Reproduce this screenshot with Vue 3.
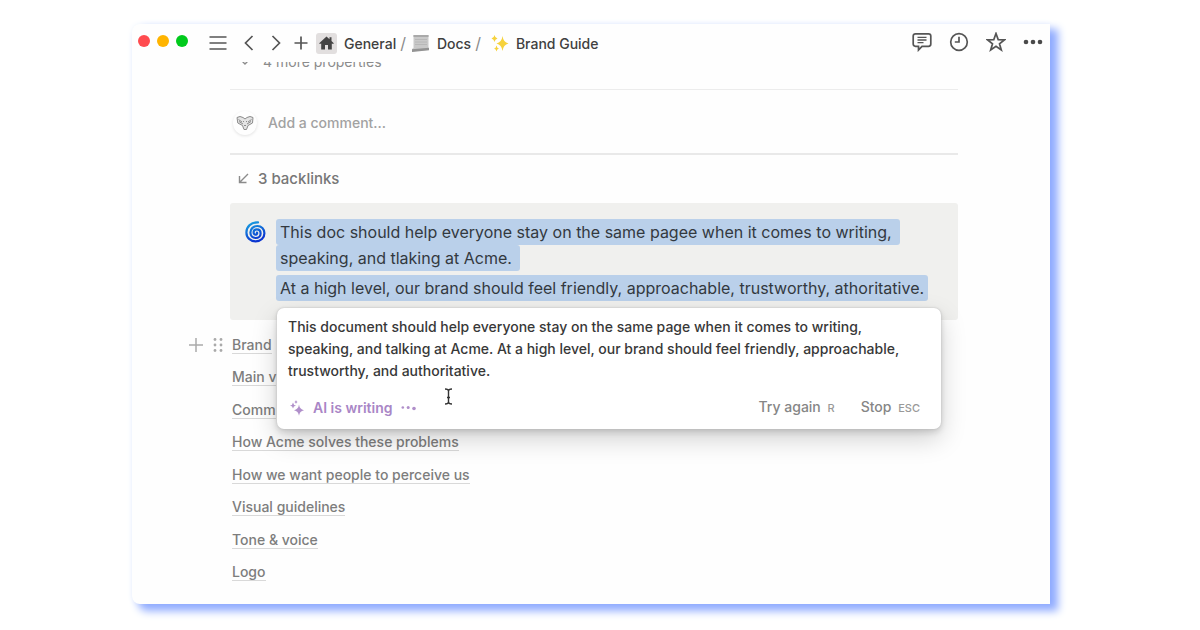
<template>
    <main class="stage">
        <div class="window">
            <header class="topbar">
                <div class="lights">
                    <span class="light red"></span>
                    <span class="light yellow"></span>
                    <span class="light green"></span>
                </div>
                <nav class="nav">
                    <button class="icon-btn" aria-label="Menu">
                        <svg width="18" height="18" viewBox="0 0 18 18"><path d="M0.5 3H17.5M0.5 9H17.5M0.5 15H17.5" /></svg>
                    </button>
                    <button class="icon-btn back" aria-label="Back">
                        <svg width="10" height="16" viewBox="0 0 10 16"><path d="M8.5 1L1.5 8L8.5 15" /></svg>
                    </button>
                    <button class="icon-btn forward" aria-label="Forward">
                        <svg width="10" height="16" viewBox="0 0 10 16"><path d="M1.5 1L8.5 8L1.5 15" /></svg>
                    </button>
                    <button class="icon-btn add" aria-label="New page">
                        <svg width="14" height="14" viewBox="0 0 14 14"><path d="M7 0.5V13.5M0.5 7H13.5" /></svg>
                    </button>
                    <a class="crumb" href="#general">
                        <span class="home">
                            <svg width="15" height="14" viewBox="0 0 15 14"><path d="M7.5 0.5L10.5 3.2V1.2H12.5V5L14.8 7.2L14.2 8L12.8 7.4V13.5H9V9H6V13.5H2.2V7.4L0.8 8L0.2 7.2Z" /></svg>
                        </span>
                        General
                    </a>
                    <span class="slash">/</span>
                    <a class="crumb docs" href="#docs">
                        <svg width="19" height="19" viewBox="0 0 19 19">
                            <path d="M2.5 1H17.5V16L1 17.5V15L2.5 14Z" fill="#c9c9c9" />
                            <path d="M2.5 1H17.5V3H2.5Z" fill="#a9a9a9" />
                            <path d="M4 5.5H16M4 8H16M4 10.5H16" stroke="#b8b8b8" />
                            <path d="M1 15.2L18 13.8V16.2L1 18Z" fill="#939393" />
                        </svg>
                        Docs
                    </a>
                    <span class="slash">/</span>
                    <a class="crumb guide" href="#brand-guide">
                        <svg width="18" height="18" viewBox="0 0 18 18" fill="#f6d23c">
                            <path d="M11.5 2Q12.3 8.2 17.5 9.5Q12.3 10.8 11.5 17Q10.7 10.8 5.5 9.5Q10.7 8.2 11.5 2Z" />
                            <path d="M3.5 1Q4 4 6.5 4.5Q4 5 3.5 8Q3 5 0.5 4.5Q3 4 3.5 1Z" />
                            <path d="M5.5 11.5Q5.9 14 8 14.5Q5.9 15 5.5 17.5Q5.1 15 3 14.5Q5.1 14 5.5 11.5Z" />
                        </svg>
                        Brand Guide
                    </a>
                </nav>
                <div class="actions">
                    <button class="icon-btn" aria-label="Comments">
                        <svg width="20" height="20" viewBox="0 0 20 20"><path d="M3.5 1.8H16.5Q18.8 1.8 18.8 4V12Q18.8 14.3 16.5 14.3H10L6.5 18V14.3H3.5Q1.2 14.3 1.2 12V4Q1.2 1.8 3.5 1.8Z" /><path class="thin" d="M5.5 5.3H14.5M5.5 8H14.5M5.5 10.7H11.5" /></svg>
                    </button>
                    <button class="icon-btn" aria-label="Updates">
                        <svg width="20" height="20" viewBox="0 0 20 20"><circle cx="10" cy="10" r="8.3" /><path d="M10 4.8V10H5.8" /></svg>
                    </button>
                    <button class="icon-btn" aria-label="Favorite">
                        <svg width="20" height="20" viewBox="0 0 20 20"><path d="M10 1.5L12.2 7.6L18.6 7.8L13.5 11.7L15.3 17.9L10 14.2L4.7 17.9L6.5 11.7L1.4 7.8L7.8 7.6Z" /></svg>
                    </button>
                    <button class="icon-btn" aria-label="More">
                        <svg class="dots" width="20" height="20" viewBox="0 0 20 20"><circle cx="3" cy="10" r="2.3" /><circle cx="10" cy="10" r="2.3" /><circle cx="17" cy="10" r="2.3" /></svg>
                    </button>
                </div>
            </header>

            <div class="page">
                <div class="properties">
                    <button class="more">
                        <svg width="10" height="10" viewBox="0 0 10 10"><path d="M1 3L5 7L9 3" /></svg>
                        4 more properties
                    </button>
                </div>

                <label class="comment">
                    <span class="avatar">
                        <svg width="18" height="16" viewBox="0 0 18 16">
                            <path d="M1 2.5Q4 0.5 7 2.5L9 4L11 2.5Q14 0.5 17 2.5L16.5 8L12 10.5L10.5 14.5H8L6.5 10.5L1.8 8Z" />
                            <path d="M2.5 4.5L6 7M3 6.5L7 9M15.5 4.5L12 7M15 6.5L11 9M7 6.5H8M10 6.5H11M8 10L9 11L10 10" />
                        </svg>
                    </span>
                    <input type="text" placeholder="Add a comment..." />
                </label>

                <button class="backlinks">
                    <svg width="11" height="11" viewBox="0 0 11 11"><path d="M10 1L1.5 9.5M1.5 3V9.5H8.5" /></svg>
                    3 backlinks
                </button>

                <section class="callout">
                    <svg class="cyclone" width="21" height="22" viewBox="0 0 21 22">
                        <defs>
                            <linearGradient id="swirl" x1="0" y1="0" x2="0.4" y2="1">
                                <stop offset="0" stop-color="#1aa5e0" />
                                <stop offset="1" stop-color="#0b35d0" />
                            </linearGradient>
                        </defs>
                        <path d="M13 1.4C6 1 1.4 5.8 1.4 11.4C1.4 16.8 5.6 20.4 10.6 20.4C15.8 20.4 19.4 16.8 19.4 12.2C19.4 8 16.4 5 12.4 5C8.4 5 5.4 7.8 5.4 11.6C5.4 14.8 7.6 17 10.6 17C13.6 17 15.6 15 15.6 12.4C15.6 10 14 8.4 11.8 8.4C9.8 8.4 8.6 9.8 8.6 11.4C8.6 13 9.8 13.8 11 13.6C12 13.4 12.4 12.4 12 11.6" />
                    </svg>
                    <div class="selected">
                        <p>
                            <mark v-for="line in intro" :key="line">{{ line }}</mark>
                        </p>
                        <p>
                            <mark class="tight">At a high level, our brand should feel friendly, approachable, trustworthy, athoritative.</mark>
                        </p>
                    </div>

                    <div class="ai-popup">
                        <p class="ai-text">
                            <span v-for="line in rewrite" :key="line">{{ line }}</span>
                        </p>
                        <footer class="ai-footer">
                            <svg width="15" height="16" viewBox="0 0 15 16">
                                <path d="M9 4.5Q9.6 9.4 14 10.2Q9.6 11 9 15.8Q8.4 11 4 10.2Q8.4 9.4 9 4.5Z" />
                                <path d="M3 2.5Q3.3 5.2 6 5.6Q3.3 6 3 8.6Q2.7 6 0 5.6Q2.7 5.2 3 2.5Z" />
                                <path d="M6 0Q6.2 1.7 7.6 2Q6.2 2.3 6 4Q5.8 2.3 4.4 2Q5.8 1.7 6 0Z" />
                            </svg>
                            <strong>AI is writing</strong>
                            <svg class="typing" width="15" height="6" viewBox="0 0 15 6"><circle cx="1.8" cy="2.5" r="1.3" /><circle cx="7.2" cy="2.5" r="1.5" /><circle cx="13" cy="3.5" r="1.8" /></svg>
                            <button class="retry">Try again <kbd>R</kbd></button>
                            <button>Stop <kbd>ESC</kbd></button>
                        </footer>
                        <svg class="cursor" width="9" height="17" viewBox="0 0 9 17"><path d="M1 1Q4.5 1 4.5 3V14Q4.5 16 1 16M8 1Q4.5 1 4.5 3M4.5 14Q4.5 16 8 16M3 9.5H6" /></svg>
                    </div>
                </section>

                <nav class="toc">
                    <div v-for="(item, index) in toc" :key="item" class="toc-row">
                        <div v-if="index === 0" class="handles">
                            <button aria-label="Add block">
                                <svg width="16" height="16" viewBox="0 0 16 16"><path d="M8 1V15M1 8H15" /></svg>
                            </button>
                            <button aria-label="Drag block">
                                <svg class="grip" width="10" height="16" viewBox="0 0 10 16"><circle v-for="n in 6" :key="n" :cx="n % 2 ? 2 : 8" :cy="2.5 + Math.floor((n - 1) / 2) * 5.5" r="1.4" /></svg>
                            </button>
                        </div>
                        <a :href="'#section-' + index">{{ item }}</a>
                    </div>
                </nav>
            </div>
        </div>
    </main>
</template>

<script setup>
const intro = [
    'This doc should help everyone stay on the same pagee when it comes to writing,',
    'speaking, and tlaking at Acme.'
];

const rewrite = [
    'This document should help everyone stay on the same page when it comes to writing,',
    'speaking, and talking at Acme. At a high level, our brand should feel friendly, approachable,',
    'trustworthy, and authoritative.'
];

const toc = [
    'Brand',
    'Main v',
    'Comm',
    'How Acme solves these problems',
    'How we want people to perceive us',
    'Visual guidelines',
    'Tone & voice',
    'Logo'
];
</script>

<style>
body {
    margin: 0;
    background: #fff;
}
</style>

<style scoped>
.stage {
    box-sizing: border-box;
    min-height: 100vh;
    display: flex;
    padding: 24px 150px 26px 132px;
    font-family: Inter, "Liberation Sans", sans-serif;
    font-size: 14px;
    font-weight: 500;
    color: #404040;
}

.window {
    flex: 1;
    min-width: 0;
    display: flex;
    flex-direction: column;
    background: #fefefe;
    border-radius: 8px 0 0 8px;
    box-shadow: 7px 6px 9px 1px #8fabff, 0 0 6px #f2f6fd;
}

button {
    padding: 0;
    border: none;
    background: none;
    font: inherit;
    color: inherit;
    cursor: pointer;
}

a {
    color: inherit;
    text-decoration: none;
}

p {
    margin: 0;
}

svg {
    flex: none;
    display: block;
}

.topbar {
    height: 38px;
    display: flex;
    align-items: center;
    padding: 0 7px 0 6px;
}

.lights {
    display: flex;
    gap: 7px;
    margin-bottom: 4px;
}

.light {
    width: 12px;
    height: 12px;
    border-radius: 50%;
}

.red {
    background: #ff4b4f;
}

.yellow {
    background: #ffb400;
}

.green {
    background: #00ca1c;
}

.nav {
    display: flex;
    align-items: center;
    margin-left: 21px;
    white-space: nowrap;
}

.icon-btn svg {
    fill: none;
    stroke: #555;
    stroke-width: 1.7;
}

.icon-btn .thin {
    stroke-width: 1.3;
}

.icon-btn .dots {
    fill: #4a4a4a;
    stroke: none;
}

.back,
.forward {
    margin-left: 17px;
}

.add {
    margin-left: 13px;
}

.crumb {
    display: flex;
    align-items: center;
    gap: 7px;
    margin-left: 8px;
}

.home {
    width: 21px;
    height: 21px;
    display: flex;
    align-items: center;
    justify-content: center;
    border-radius: 3px;
    background: #e2dfdf;
    fill: #444;
}

.slash {
    margin-left: 4px;
    font-size: 16px;
    font-weight: 400;
    color: #8a8a8a;
}

.docs {
    margin-left: 5px;
}

.guide {
    margin-left: 10px;
}

.actions {
    display: flex;
    align-items: center;
    gap: 17px;
    margin-left: auto;
    margin-bottom: 2px;
}

.page {
    flex: 1;
    display: flex;
    flex-direction: column;
    align-items: stretch;
    padding: 0 92px 16px 98px;
}

/* the list above is scrolled under the top bar */
.properties {
    height: 27px;
    overflow: hidden;
    display: flex;
    align-items: flex-start;
    border-bottom: 1px solid #ececec;
}

.more {
    display: flex;
    align-items: center;
    gap: 13px;
    margin: -11px 0 0 10px;
    line-height: 22px;
    font-weight: 400;
    color: #8b8b8b;
}

.more svg,
.backlinks svg {
    fill: none;
    stroke: #8b8b8b;
    stroke-width: 1.4;
}

.comment {
    height: 61px;
    display: flex;
    align-items: center;
    gap: 11px;
    padding: 2px 3px 0;
    border-bottom: 2px solid #e9e9e9;
}

.avatar {
    width: 24px;
    height: 24px;
    display: flex;
    align-items: center;
    justify-content: center;
    border-radius: 50%;
    box-shadow: 0 1px 3px #e2e2e2;
    fill: #e4e4e4;
    stroke: #8c8c8c;
}

.comment input {
    flex: 1;
    border: none;
    outline: none;
    padding: 0;
    background: none;
    font: inherit;
    color: #373737;
}

.comment input::placeholder {
    color: #a2a2a2;
    opacity: 1;
}

.backlinks {
    height: 46px;
    display: flex;
    align-items: center;
    gap: 9px;
    margin-bottom: 2px;
    padding: 0 8px;
    font-size: 15px;
    color: #777;
}

.callout {
    position: relative;
    display: flex;
    gap: 10px;
    padding: 16px 16px 19px 15px;
    background: #f0f0ee;
    border-radius: 3px;
}

.cyclone {
    margin-top: 2px;
    fill: none;
    stroke: url(#swirl);
    stroke-width: 2.2;
    stroke-linecap: round;
}

.selected {
    font-size: 16px;
    font-weight: 400;
    white-space: nowrap;
}

.selected p + p {
    margin-top: 4px;
}

.selected mark {
    display: block;
    width: fit-content;
    padding: 0 8px 0 4px;
    line-height: 26px;
    border-radius: 3px;
    background: #bad0ea;
    color: #33393f;
}

.selected .tight {
    padding-right: 4px;
}

.ai-popup {
    position: absolute;
    z-index: 1;
    top: 105px;
    left: 47px;
    right: 17px;
    padding: 8px 21px 9px 11px;
    background: #fff;
    border-radius: 7px;
    box-shadow: 0 0 2px #bbb, 0 3px 6px rgba(0, 0, 0, 0.14), 0 10px 26px rgba(0, 0, 0, 0.18);
}

.ai-text {
    line-height: 22px;
    white-space: nowrap;
    color: #383838;
}

.ai-text span {
    display: block;
}

.ai-footer {
    display: flex;
    align-items: center;
    gap: 8px;
    margin-top: 13px;
    padding-left: 2px;
    line-height: 24px;
    color: #868686;
    fill: #b08fca;
}

.ai-footer strong {
    font-weight: 600;
    color: #a986c6;
}

.retry {
    margin-left: auto;
    margin-right: 18px;
}

kbd {
    margin-left: 3px;
    font-family: inherit;
    font-size: 11px;
    color: #999;
}

.cursor {
    position: absolute;
    top: 80px;
    left: 167px;
    fill: none;
    stroke: #333;
    stroke-width: 1.4;
}

.toc {
    flex: 1;
    display: flex;
    flex-direction: column;
    justify-content: space-between;
    margin-top: 9px;
    padding-left: 2px;
    color: #7d7d7d;
}

.toc-row {
    position: relative;
    line-height: 32px;
}

.toc a {
    border-bottom: 1px solid #d9d9d9;
}

/* hover controls hang in the page margin */
.handles {
    position: absolute;
    top: 0;
    right: 100%;
    height: 32px;
    display: flex;
    align-items: center;
    gap: 9px;
    margin-right: 9px;
    fill: none;
    stroke: #aaa;
    stroke-width: 1.5;
}

.grip {
    fill: #aaa;
    stroke: none;
}
</style>
